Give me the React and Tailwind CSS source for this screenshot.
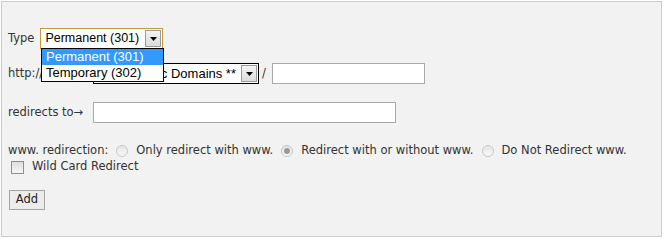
import React from "react";

const lbl = { fontFamily: "Tahoma, 'DejaVu Sans', sans-serif" };
const arial = { fontFamily: "'Liberation Sans', Arial, sans-serif" };

function Arrow() {
  return (
    <span className="flex h-full w-[16px] items-center justify-center border border-[#9a9a9a] bg-gradient-to-b from-[#f4f4f4] to-[#dcdcdc]">
      <svg width="7" height="4" viewBox="0 0 7 4">
        <path d="M0 0H7L3.5 4Z" fill="#000" />
      </svg>
    </span>
  );
}

function Radio({ checked }) {
  return (
    <span className="relative mx-[8px] inline-flex h-[12px] w-[12px] items-center justify-center rounded-full border border-[#c6c6c6] bg-gradient-to-b from-[#e6e6e6] to-[#f8f8f8]">
      {checked && <span className="h-[6px] w-[6px] rounded-full bg-[#9a9a9a]" />}
    </span>
  );
}

export default function App() {
  return (
    <div className="pl-[1px] pt-[1px]">
      <div
        className="flex h-[236px] w-[661px] flex-col border border-[#cccccc] bg-[#f2f2f2] pl-[6px] text-[11.5px] text-[#333]"
        style={lbl}
      >
        {/* Row 1 */}
        <div className="relative mt-[26px] flex h-[21px] items-center">
          <span>Type</span>
          <div className="ml-[6px] flex h-[21px] w-[123px] items-center border border-[#c29a3c] bg-white pl-[4px] pr-[1px] text-[12.5px] text-black" style={arial}>
            <span className="flex-1 whitespace-nowrap">Permanent (301)</span>
            <span className="h-[17px]"><Arrow /></span>
          </div>
          <div className="absolute left-[33px] top-[20px] z-10 w-[123px] border border-black bg-white text-[13px] text-black" style={arial}>
            <div className="flex h-[16px] items-center bg-[#3399ff] pl-[4px] text-white">Permanent (301)</div>
            <div className="flex h-[16px] items-center pl-[4px]">Temporary (302)</div>
          </div>
        </div>

        {/* Row 2 */}
        <div className="mt-[14px] flex h-[21px] items-center">
          <span className="w-[85px]">http://</span>
          <div className="flex h-[21px] w-[166px] items-center overflow-hidden border border-black bg-white pl-[4px] pr-[1px] text-[13px] text-black" style={arial}>
            <span className="flex flex-1 justify-end overflow-hidden whitespace-nowrap pr-[5px]">** All Public Domains **</span>
            <span className="h-[17px]"><Arrow /></span>
          </div>
          <span className="ml-[3px] mr-[6px]">/</span>
          <div className="h-[21px] w-[153px] border border-[#a9a9a9] bg-white" />
        </div>

        {/* Row 3 */}
        <div className="mt-[18px] flex h-[21px] items-center">
          <span className="w-[85px]">redirects to→</span>
          <div className="h-[21px] w-[303px] border border-[#a9a9a9] bg-white" />
        </div>

        {/* Row 4 */}
        <div className="mt-[20px] flex h-[16px] items-center">
          <span>www. redirection:</span>
          <Radio />
          <span>Only redirect with www.</span>
          <Radio checked />
          <span>Redirect with or without www.</span>
          <Radio />
          <span>Do Not Redirect www.</span>
        </div>

        {/* Row 5 */}
        <div className="flex h-[16px] items-center">
          <span className="ml-[3px] mr-[8px] h-[13px] w-[13px] border border-[#8f8f8f] bg-gradient-to-b from-[#dedede] to-[#f6f6f6]" />
          <span>Wild Card Redirect</span>
        </div>

        {/* Add */}
        <div className="mt-[15px] flex">
          <button className="ml-[1px] h-[20px] w-[36px] border border-[#a6a6a6] bg-[#ececec] text-[11.5px] text-[#222]" style={lbl}>
            Add
          </button>
        </div>
      </div>
    </div>
  );
}
